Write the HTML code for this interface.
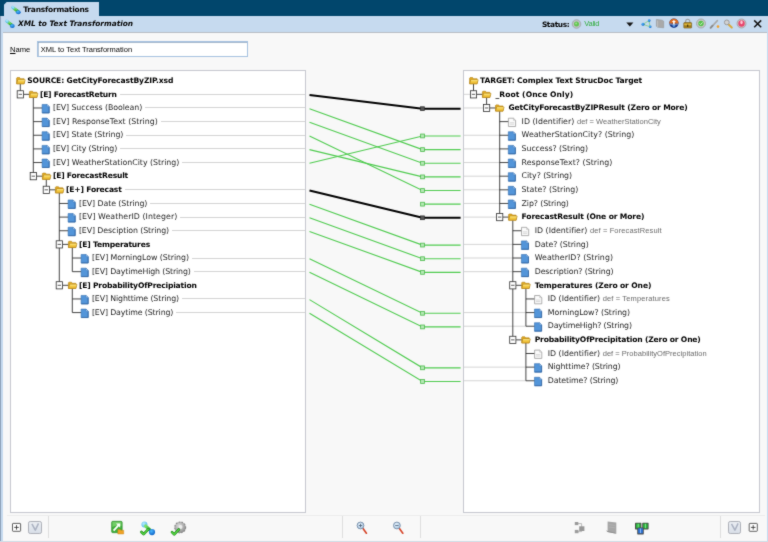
<!DOCTYPE html><html><head><meta charset="utf-8"><title>XML to Text Transformation</title><style>

html,body{margin:0;padding:0}
body{width:768px;height:542px;overflow:hidden;background:#f7f7f7;position:relative;font-family:"DejaVu Sans","Liberation Sans",sans-serif;color:#222}
#wrap{position:absolute;left:0;top:0;width:768px;height:542px;overflow:hidden;filter:url(#soft)}
#txtlayer{position:absolute;left:0;top:0;width:768px;height:542px;will-change:transform;transform:translateZ(0)}
.abs{position:absolute}
#topbar{left:0;top:0;width:768px;height:16px;background:#01466c}
#tab{left:3.7px;top:2px;width:95.5px;height:14.2px;background:#c6daef;clip-path:polygon(3px 0,100% 0,100% 100%,0 100%,0 3px)}
#tabtxt{left:23.3px;top:3.1px;height:13px;line-height:13px;font-weight:bold;font-size:7.5px;letter-spacing:-0.23px;color:#050505;white-space:nowrap}
#titlebar{left:0;top:16px;width:768px;height:16.5px;background:#c6daef;border-bottom:0.7px solid #b9bec4;box-sizing:border-box}
#title{left:18px;top:17px;height:13px;line-height:13px;font-weight:bold;font-style:italic;font-size:7.4px;color:#050505;white-space:nowrap}
#lstrip{left:0;top:16px;width:3px;height:526px;background:#c6daef;border-left:1px solid #8ea2ba;box-sizing:border-box}
#rstrip{left:766.8px;top:32px;width:1.2px;height:510px;background:#c6daef}
#bstrip{left:0;top:540.6px;width:768px;height:1.4px;background:#d3dbe5}
#content{left:3px;top:32.2px;width:763.8px;height:508.4px;background:#f8f8f8}
#name{left:10px;top:42.9px;height:13px;line-height:13px;font-family:"Liberation Sans",sans-serif;font-size:7.6px;color:#000;white-space:nowrap}
#name u{text-decoration-thickness:0.5px;text-underline-offset:0.6px}
#input{left:37.2px;top:40.7px;width:211.2px;height:16.1px;box-sizing:border-box;border:1.5px solid #a6c2e0;background:#fff;box-shadow:inset 0.6px 0.8px 0 #8aa3bf}
#inputtxt{left:40.8px;top:43.3px;height:13px;line-height:13px;font-family:"Liberation Sans",sans-serif;font-size:7.5px;color:#050505;white-space:nowrap}
.panel{background:#fff;border:1px solid #c6c8cf;box-sizing:border-box}
#lp{left:10px;top:70px;width:296.3px;height:443px}
#rp{left:463px;top:70px;width:296.8px;height:443px}
.t{position:absolute;height:13.64px;line-height:13.64px;white-space:nowrap}
.t.r{font-size:7.85px;color:#262626}
.t.b{font-size:7.6px;letter-spacing:-0.18px;font-weight:bold;color:#000}
.t.ll{display:flex;align-items:center;right:462.7px}
.t.ll span{flex:none}
.t.ll i{flex:1;height:1px;background:#d4d4d4;margin-left:3px;position:relative}
.t.r.ll i{top:0px}
.t.b.ll i{top:-0.1px}
.def{font-family:"Liberation Sans",sans-serif;font-size:7.5px;color:#6a6a6a;margin-left:2.7px;letter-spacing:0}
#status{left:541.9px;top:17.5px;height:13px;line-height:13px;font-weight:bold;font-size:7.4px;letter-spacing:-0.36px;color:#050505;white-space:nowrap}
#valid{left:584.2px;top:17.3px;height:13px;line-height:13px;font-family:"Liberation Sans",sans-serif;font-size:7.5px;letter-spacing:-0.2px;color:#32ad3e;white-space:nowrap}
#tbline{left:6.5px;top:515.4px;width:758px;height:1px;background:#ececec}
.sep{position:absolute;top:516.3px;height:21.5px;width:1px;background:#dedede}
.vbtn{position:absolute;top:520.6px;width:13.2px;height:13px;box-sizing:border-box;border:0.8px solid #adb0b8;border-radius:2.2px;background:linear-gradient(#eaedf2,#d9dfe8)}

</style></head><body><svg width="0" height="0" style="position:absolute"><defs><filter id="soft" x="0" y="0" width="100%" height="100%" color-interpolation-filters="sRGB"><feConvolveMatrix order="3" kernelMatrix="0.6 2.0 0.6 2.0 16 2.0 0.6 2.0 0.6" divisor="26.40" edgeMode="duplicate" preserveAlpha="true"/></filter></defs></svg><div id="wrap">
<div class="abs" id="topbar"></div>
<div class="abs" id="content"></div>
<div class="abs" id="titlebar"></div>
<div class="abs" id="lstrip"></div><div class="abs" id="rstrip"></div><div class="abs" id="bstrip"></div>
<div class="abs" id="tab"></div>
<div class="abs" id="input"></div>
<div class="abs panel" id="lp"></div><div class="abs panel" id="rp"></div>
<div class="abs" id="tbline"></div>
<div class="sep" style="left:48.1px"></div>
<div class="sep" style="left:341.6px"></div>
<div class="sep" style="left:420.2px"></div>
<div class="sep" style="left:720.1px"></div>
<div class="vbtn" style="left:28.4px"></div><div class="vbtn" style="left:728px"></div>
<div id="txtlayer">
<div class="abs" id="tabtxt">Transformations</div>
<div class="abs" id="title">XML to Text Transformation</div>
<div class="abs" id="status">Status:</div><div class="abs" id="valid">Valid</div>
<div class="abs" id="name"><u>N</u>ame</div>
<div class="abs" id="inputtxt">XML to Text Transformation</div>
<div class="t b" id="L0" style="left:27.20px;top:73.98px"><span class="m" style="letter-spacing:-0.118px">SOURCE: GetCityForecastByZIP.xsd</span></div>
<div class="t b ll" id="L1" style="left:39.90px;top:87.62px"><span class="m" style="letter-spacing:-0.218px">[E] ForecastReturn</span><i></i></div>
<div class="t r ll" id="L2" style="left:52.90px;top:101.16px"><span class="m" style="letter-spacing:-0.072px">[EV] Success (Boolean)</span><i></i></div>
<div class="t r ll" id="L3" style="left:52.90px;top:114.80px"><span class="m" style="letter-spacing:0.016px">[EV] ResponseText (String)</span><i></i></div>
<div class="t r ll" id="L4" style="left:52.90px;top:128.44px"><span class="m" style="letter-spacing:-0.070px">[EV] State (String)</span><i></i></div>
<div class="t r ll" id="L5" style="left:52.90px;top:142.08px"><span class="m" style="letter-spacing:-0.113px">[EV] City (String)</span><i></i></div>
<div class="t r ll" id="L6" style="left:52.90px;top:155.72px"><span class="m" style="letter-spacing:-0.026px">[EV] WeatherStationCity (String)</span><i></i></div>
<div class="t b" id="L7" style="left:52.90px;top:169.46px"><span class="m" style="letter-spacing:-0.200px">[E] ForecastResult</span></div>
<div class="t b ll" id="L8" style="left:65.90px;top:183.10px"><span class="m" style="letter-spacing:-0.161px">[E+] Forecast</span><i></i></div>
<div class="t r ll" id="L9" style="left:78.90px;top:196.64px"><span class="m" style="letter-spacing:-0.073px">[EV] Date (String)</span><i></i></div>
<div class="t r ll" id="L10" style="left:78.90px;top:210.28px"><span class="m" style="letter-spacing:0.052px">[EV] WeatherID (Integer)</span><i></i></div>
<div class="t r ll" id="L11" style="left:78.90px;top:223.92px"><span class="m" style="letter-spacing:-0.096px">[EV] Desciption (String)</span><i></i></div>
<div class="t b" id="L12" style="left:78.90px;top:237.66px"><span class="m" style="letter-spacing:-0.176px">[E] Temperatures</span></div>
<div class="t r ll" id="L13" style="left:91.90px;top:251.20px"><span class="m" style="letter-spacing:-0.044px">[EV] MorningLow (String)</span><i></i></div>
<div class="t r ll" id="L14" style="left:91.90px;top:264.84px"><span class="m" style="letter-spacing:-0.136px">[EV] DaytimeHigh (String)</span><i></i></div>
<div class="t b" id="L15" style="left:78.90px;top:278.58px"><span class="m" style="letter-spacing:-0.180px">[E] ProbabilityOfPrecipiation</span></div>
<div class="t r ll" id="L16" style="left:91.90px;top:292.12px"><span class="m" style="letter-spacing:-0.115px">[EV] Nighttime (String)</span><i></i></div>
<div class="t r ll" id="L17" style="left:91.90px;top:305.76px"><span class="m" style="letter-spacing:-0.132px">[EV] Daytime (String)</span><i></i></div>
<div class="t b" id="R0" style="left:480.00px;top:73.98px"><span class="m" style="letter-spacing:-0.134px">TARGET: Complex Text StrucDoc Target</span></div>
<div class="t b" id="R1" style="left:495.40px;top:87.62px"><span class="m" style="letter-spacing:0.061px">_Root (Once Only)</span></div>
<div class="t b" id="R2" style="left:508.50px;top:101.26px"><span class="m" style="letter-spacing:-0.157px">GetCityForecastByZIPResult (Zero or More)</span></div>
<div class="t r" id="R3" style="left:521.60px;top:114.80px"><span class="m" style="letter-spacing:0.026px">ID (Identifier)</span><span class="def" id="R3d" style="letter-spacing:0.019px">def = WeatherStationCity</span></div>
<div class="t r" id="R4" style="left:521.60px;top:128.44px"><span class="m" style="letter-spacing:0.008px">WeatherStationCity? (String)</span></div>
<div class="t r" id="R5" style="left:521.60px;top:142.08px"><span class="m" style="letter-spacing:-0.080px">Success? (String)</span></div>
<div class="t r" id="R6" style="left:521.60px;top:155.72px"><span class="m" style="letter-spacing:0.053px">ResponseText? (String)</span></div>
<div class="t r" id="R7" style="left:521.60px;top:169.36px"><span class="m" style="letter-spacing:-0.083px">City? (String)</span></div>
<div class="t r" id="R8" style="left:521.60px;top:183.00px"><span class="m" style="letter-spacing:-0.017px">State? (String)</span></div>
<div class="t r" id="R9" style="left:521.60px;top:196.64px"><span class="m" style="letter-spacing:-0.117px">Zip? (String)</span></div>
<div class="t b" id="R10" style="left:521.60px;top:210.38px"><span class="m" style="letter-spacing:-0.133px">ForecastResult (One or More)</span></div>
<div class="t r" id="R11" style="left:534.70px;top:223.92px"><span class="m" style="letter-spacing:0.020px">ID (Identifier)</span><span class="def" id="R11d" style="letter-spacing:0.115px">def = ForecastResult</span></div>
<div class="t r" id="R12" style="left:534.70px;top:237.56px"><span class="m" style="letter-spacing:-0.059px">Date? (String)</span></div>
<div class="t r" id="R13" style="left:534.70px;top:251.20px"><span class="m" style="letter-spacing:0.039px">WeatherID? (String)</span></div>
<div class="t r" id="R14" style="left:534.70px;top:264.84px"><span class="m" style="letter-spacing:-0.098px">Description? (String)</span></div>
<div class="t b" id="R15" style="left:534.70px;top:278.58px"><span class="m" style="letter-spacing:-0.115px">Temperatures (Zero or One)</span></div>
<div class="t r" id="R16" style="left:547.80px;top:292.12px"><span class="m" style="letter-spacing:-0.007px">ID (Identifier)</span><span class="def" id="R16d" style="letter-spacing:0.139px">def = Temperatures</span></div>
<div class="t r" id="R17" style="left:547.80px;top:305.76px"><span class="m" style="letter-spacing:-0.059px">MorningLow? (String)</span></div>
<div class="t r" id="R18" style="left:547.80px;top:319.40px"><span class="m" style="letter-spacing:-0.163px">DaytimeHigh? (String)</span></div>
<div class="t b" id="R19" style="left:534.70px;top:333.14px"><span class="m" style="letter-spacing:-0.159px">ProbabilityOfPrecipitation (Zero or One)</span></div>
<div class="t r" id="R20" style="left:547.80px;top:346.68px"><span class="m" style="letter-spacing:-0.007px">ID (Identifier)</span><span class="def" id="R20d" style="letter-spacing:0.025px">def = ProbabilityOfPrecipitation</span></div>
<div class="t r" id="R21" style="left:547.80px;top:360.32px"><span class="m" style="letter-spacing:-0.120px">Nighttime? (String)</span></div>
<div class="t r" id="R22" style="left:547.80px;top:373.96px"><span class="m" style="letter-spacing:-0.120px">Datetime? (String)</span></div>
</div>
<svg class="abs" style="left:0;top:0" width="768" height="542" viewBox="0 0 768 542">
<path d="M464.00 94.34 H470.20" stroke="#d4d4d4" stroke-width="1"/>
<path d="M464.00 107.98 H483.30" stroke="#d4d4d4" stroke-width="1"/>
<path d="M464.00 135.26 H499.70" stroke="#d4d4d4" stroke-width="1"/>
<path d="M464.00 148.90 H499.70" stroke="#d4d4d4" stroke-width="1"/>
<path d="M464.00 162.54 H499.70" stroke="#d4d4d4" stroke-width="1"/>
<path d="M464.00 176.18 H499.70" stroke="#d4d4d4" stroke-width="1"/>
<path d="M464.00 189.82 H499.70" stroke="#d4d4d4" stroke-width="1"/>
<path d="M464.00 203.46 H499.70" stroke="#d4d4d4" stroke-width="1"/>
<path d="M464.00 217.10 H496.40" stroke="#d4d4d4" stroke-width="1"/>
<path d="M464.00 244.38 H512.80" stroke="#d4d4d4" stroke-width="1"/>
<path d="M464.00 258.02 H512.80" stroke="#d4d4d4" stroke-width="1"/>
<path d="M464.00 271.66 H512.80" stroke="#d4d4d4" stroke-width="1"/>
<path d="M464.00 312.58 H525.90" stroke="#d4d4d4" stroke-width="1"/>
<path d="M464.00 326.22 H525.90" stroke="#d4d4d4" stroke-width="1"/>
<path d="M464.00 367.14 H525.90" stroke="#d4d4d4" stroke-width="1"/>
<path d="M464.00 380.78 H525.90" stroke="#d4d4d4" stroke-width="1"/>
<path d="M309.5 95.04 L422.5 108.68 H460.6" fill="none" stroke="#000" stroke-width="2.05" stroke-linejoin="round"/>
<rect x="420.60" y="106.78" width="3.8" height="3.8" fill="#555" stroke="#2a2a2a" stroke-width="0.7"/>
<path d="M309.5 190.52 L422.5 217.80 H460.6" fill="none" stroke="#000" stroke-width="2.05" stroke-linejoin="round"/>
<rect x="420.60" y="215.90" width="3.8" height="3.8" fill="#555" stroke="#2a2a2a" stroke-width="0.7"/>
<path d="M309.5 108.68 L422.5 149.60 H460.6" fill="none" stroke="#4fcb4f" stroke-width="1.1"/>
<rect x="420.60" y="147.70" width="3.8" height="3.8" fill="#b4e8b4" stroke="#4cba4c" stroke-width="0.8"/>
<path d="M309.5 122.32 L422.5 163.24 H460.6" fill="none" stroke="#4fcb4f" stroke-width="1.1"/>
<rect x="420.60" y="161.34" width="3.8" height="3.8" fill="#b4e8b4" stroke="#4cba4c" stroke-width="0.8"/>
<path d="M309.5 135.96 L422.5 190.52 H460.6" fill="none" stroke="#4fcb4f" stroke-width="1.1"/>
<rect x="420.60" y="188.62" width="3.8" height="3.8" fill="#b4e8b4" stroke="#4cba4c" stroke-width="0.8"/>
<path d="M309.5 149.60 L422.5 176.88 H460.6" fill="none" stroke="#4fcb4f" stroke-width="1.1"/>
<rect x="420.60" y="174.98" width="3.8" height="3.8" fill="#b4e8b4" stroke="#4cba4c" stroke-width="0.8"/>
<path d="M309.5 163.24 L422.5 135.96 H460.6" fill="none" stroke="#4fcb4f" stroke-width="1.1"/>
<rect x="420.60" y="134.06" width="3.8" height="3.8" fill="#b4e8b4" stroke="#4cba4c" stroke-width="0.8"/>
<path d="M422.5 204.16 H460.6" fill="none" stroke="#4fcb4f" stroke-width="1.1"/>
<rect x="420.60" y="202.26" width="3.8" height="3.8" fill="#b4e8b4" stroke="#4cba4c" stroke-width="0.8"/>
<path d="M309.5 204.16 L422.5 245.08 H460.6" fill="none" stroke="#4fcb4f" stroke-width="1.1"/>
<rect x="420.60" y="243.18" width="3.8" height="3.8" fill="#b4e8b4" stroke="#4cba4c" stroke-width="0.8"/>
<path d="M309.5 217.80 L422.5 258.72 H460.6" fill="none" stroke="#4fcb4f" stroke-width="1.1"/>
<rect x="420.60" y="256.82" width="3.8" height="3.8" fill="#b4e8b4" stroke="#4cba4c" stroke-width="0.8"/>
<path d="M309.5 231.44 L422.5 272.36 H460.6" fill="none" stroke="#4fcb4f" stroke-width="1.1"/>
<rect x="420.60" y="270.46" width="3.8" height="3.8" fill="#b4e8b4" stroke="#4cba4c" stroke-width="0.8"/>
<path d="M309.5 258.72 L422.5 313.28 H460.6" fill="none" stroke="#4fcb4f" stroke-width="1.1"/>
<rect x="420.60" y="311.38" width="3.8" height="3.8" fill="#b4e8b4" stroke="#4cba4c" stroke-width="0.8"/>
<path d="M309.5 272.36 L422.5 326.92 H460.6" fill="none" stroke="#4fcb4f" stroke-width="1.1"/>
<rect x="420.60" y="325.02" width="3.8" height="3.8" fill="#b4e8b4" stroke="#4cba4c" stroke-width="0.8"/>
<path d="M309.5 299.64 L422.5 367.84 H460.6" fill="none" stroke="#4fcb4f" stroke-width="1.1"/>
<rect x="420.60" y="365.94" width="3.8" height="3.8" fill="#b4e8b4" stroke="#4cba4c" stroke-width="0.8"/>
<path d="M309.5 313.28 L422.5 381.48 H460.6" fill="none" stroke="#4fcb4f" stroke-width="1.1"/>
<rect x="420.60" y="379.58" width="3.8" height="3.8" fill="#b4e8b4" stroke="#4cba4c" stroke-width="0.8"/>
<path d="M20.30 83.90 V94.34" stroke="#303030" stroke-width="0.9"/>
<path d="M33.30 97.54 V176.18" stroke="#303030" stroke-width="0.9"/>
<path d="M46.30 179.38 V189.82" stroke="#303030" stroke-width="0.9"/>
<path d="M59.30 193.02 V285.30" stroke="#303030" stroke-width="0.9"/>
<path d="M72.30 247.58 V271.66" stroke="#303030" stroke-width="0.9"/>
<path d="M72.30 288.50 V312.58" stroke="#303030" stroke-width="0.9"/>
<g transform="translate(16.20,77.20)"><path d="M0.4 0.9 L0.4 6.5 L7.9 6.5 L7.9 1.5 L4.3 1.5 L3.5 0.4 L0.9 0.4 Z" fill="#e2ab22" stroke="#ad7c12" stroke-width="0.6"/><path d="M0.5 6.7 L1.5 2.6 L9.0 2.6 L7.9 6.7 Z" fill="url(#gFold)" stroke="#ad7c12" stroke-width="0.6"/><path d="M1.9 3.2 L8.3 3.2" stroke="#fdeb96" stroke-width="0.7"/></g>
<path d="M23.60 94.34 H29.50" stroke="#303030" stroke-width="0.9"/>
<rect x="17.20" y="90.74" width="6.2" height="7.2" fill="#fff" stroke="#303030" stroke-width="0.8"/><path d="M18.60 94.34 H22.00" stroke="#333" stroke-width="0.8"/>
<g transform="translate(29.00,90.84)"><path d="M0.4 0.9 L0.4 6.5 L7.9 6.5 L7.9 1.5 L4.3 1.5 L3.5 0.4 L0.9 0.4 Z" fill="#e2ab22" stroke="#ad7c12" stroke-width="0.6"/><path d="M0.5 6.7 L1.5 2.6 L9.0 2.6 L7.9 6.7 Z" fill="url(#gFold)" stroke="#ad7c12" stroke-width="0.6"/><path d="M1.9 3.2 L8.3 3.2" stroke="#fdeb96" stroke-width="0.7"/></g>
<path d="M33.30 107.98 H42.50" stroke="#303030" stroke-width="0.9"/>
<g transform="translate(41.70,104.08)"><path d="M0.4 0.4 L5.4 0.4 L7.5 2.5 L7.5 8.9 L0.4 8.9 Z" fill="#5395d9" stroke="#346fb0" stroke-width="0.6"/><path d="M0.6 8.8 H7.5 V2.8" fill="none" stroke="#2b5f9c" stroke-width="0.7"/><path d="M5.4 0.4 L5.4 2.5 L7.5 2.5 Z" fill="#d5e4f5" stroke="#346fb0" stroke-width="0.4"/></g>
<path d="M33.30 121.62 H42.50" stroke="#303030" stroke-width="0.9"/>
<g transform="translate(41.70,117.72)"><path d="M0.4 0.4 L5.4 0.4 L7.5 2.5 L7.5 8.9 L0.4 8.9 Z" fill="#5395d9" stroke="#346fb0" stroke-width="0.6"/><path d="M0.6 8.8 H7.5 V2.8" fill="none" stroke="#2b5f9c" stroke-width="0.7"/><path d="M5.4 0.4 L5.4 2.5 L7.5 2.5 Z" fill="#d5e4f5" stroke="#346fb0" stroke-width="0.4"/></g>
<path d="M33.30 135.26 H42.50" stroke="#303030" stroke-width="0.9"/>
<g transform="translate(41.70,131.36)"><path d="M0.4 0.4 L5.4 0.4 L7.5 2.5 L7.5 8.9 L0.4 8.9 Z" fill="#5395d9" stroke="#346fb0" stroke-width="0.6"/><path d="M0.6 8.8 H7.5 V2.8" fill="none" stroke="#2b5f9c" stroke-width="0.7"/><path d="M5.4 0.4 L5.4 2.5 L7.5 2.5 Z" fill="#d5e4f5" stroke="#346fb0" stroke-width="0.4"/></g>
<path d="M33.30 148.90 H42.50" stroke="#303030" stroke-width="0.9"/>
<g transform="translate(41.70,145.00)"><path d="M0.4 0.4 L5.4 0.4 L7.5 2.5 L7.5 8.9 L0.4 8.9 Z" fill="#5395d9" stroke="#346fb0" stroke-width="0.6"/><path d="M0.6 8.8 H7.5 V2.8" fill="none" stroke="#2b5f9c" stroke-width="0.7"/><path d="M5.4 0.4 L5.4 2.5 L7.5 2.5 Z" fill="#d5e4f5" stroke="#346fb0" stroke-width="0.4"/></g>
<path d="M33.30 162.54 H42.50" stroke="#303030" stroke-width="0.9"/>
<g transform="translate(41.70,158.64)"><path d="M0.4 0.4 L5.4 0.4 L7.5 2.5 L7.5 8.9 L0.4 8.9 Z" fill="#5395d9" stroke="#346fb0" stroke-width="0.6"/><path d="M0.6 8.8 H7.5 V2.8" fill="none" stroke="#2b5f9c" stroke-width="0.7"/><path d="M5.4 0.4 L5.4 2.5 L7.5 2.5 Z" fill="#d5e4f5" stroke="#346fb0" stroke-width="0.4"/></g>
<path d="M36.60 176.18 H42.50" stroke="#303030" stroke-width="0.9"/>
<rect x="30.20" y="172.58" width="6.2" height="7.2" fill="#fff" stroke="#303030" stroke-width="0.8"/><path d="M31.60 176.18 H35.00" stroke="#333" stroke-width="0.8"/>
<g transform="translate(42.00,172.68)"><path d="M0.4 0.9 L0.4 6.5 L7.9 6.5 L7.9 1.5 L4.3 1.5 L3.5 0.4 L0.9 0.4 Z" fill="#e2ab22" stroke="#ad7c12" stroke-width="0.6"/><path d="M0.5 6.7 L1.5 2.6 L9.0 2.6 L7.9 6.7 Z" fill="url(#gFold)" stroke="#ad7c12" stroke-width="0.6"/><path d="M1.9 3.2 L8.3 3.2" stroke="#fdeb96" stroke-width="0.7"/></g>
<path d="M49.60 189.82 H55.50" stroke="#303030" stroke-width="0.9"/>
<rect x="43.20" y="186.22" width="6.2" height="7.2" fill="#fff" stroke="#303030" stroke-width="0.8"/><path d="M44.60 189.82 H48.00" stroke="#333" stroke-width="0.8"/>
<g transform="translate(55.00,186.32)"><path d="M0.4 0.9 L0.4 6.5 L7.9 6.5 L7.9 1.5 L4.3 1.5 L3.5 0.4 L0.9 0.4 Z" fill="#e2ab22" stroke="#ad7c12" stroke-width="0.6"/><path d="M0.5 6.7 L1.5 2.6 L9.0 2.6 L7.9 6.7 Z" fill="url(#gFold)" stroke="#ad7c12" stroke-width="0.6"/><path d="M1.9 3.2 L8.3 3.2" stroke="#fdeb96" stroke-width="0.7"/></g>
<path d="M59.30 203.46 H68.50" stroke="#303030" stroke-width="0.9"/>
<g transform="translate(67.70,199.56)"><path d="M0.4 0.4 L5.4 0.4 L7.5 2.5 L7.5 8.9 L0.4 8.9 Z" fill="#5395d9" stroke="#346fb0" stroke-width="0.6"/><path d="M0.6 8.8 H7.5 V2.8" fill="none" stroke="#2b5f9c" stroke-width="0.7"/><path d="M5.4 0.4 L5.4 2.5 L7.5 2.5 Z" fill="#d5e4f5" stroke="#346fb0" stroke-width="0.4"/></g>
<path d="M59.30 217.10 H68.50" stroke="#303030" stroke-width="0.9"/>
<g transform="translate(67.70,213.20)"><path d="M0.4 0.4 L5.4 0.4 L7.5 2.5 L7.5 8.9 L0.4 8.9 Z" fill="#5395d9" stroke="#346fb0" stroke-width="0.6"/><path d="M0.6 8.8 H7.5 V2.8" fill="none" stroke="#2b5f9c" stroke-width="0.7"/><path d="M5.4 0.4 L5.4 2.5 L7.5 2.5 Z" fill="#d5e4f5" stroke="#346fb0" stroke-width="0.4"/></g>
<path d="M59.30 230.74 H68.50" stroke="#303030" stroke-width="0.9"/>
<g transform="translate(67.70,226.84)"><path d="M0.4 0.4 L5.4 0.4 L7.5 2.5 L7.5 8.9 L0.4 8.9 Z" fill="#5395d9" stroke="#346fb0" stroke-width="0.6"/><path d="M0.6 8.8 H7.5 V2.8" fill="none" stroke="#2b5f9c" stroke-width="0.7"/><path d="M5.4 0.4 L5.4 2.5 L7.5 2.5 Z" fill="#d5e4f5" stroke="#346fb0" stroke-width="0.4"/></g>
<path d="M62.60 244.38 H68.50" stroke="#303030" stroke-width="0.9"/>
<rect x="56.20" y="240.78" width="6.2" height="7.2" fill="#fff" stroke="#303030" stroke-width="0.8"/><path d="M57.60 244.38 H61.00" stroke="#333" stroke-width="0.8"/>
<g transform="translate(68.00,240.88)"><path d="M0.4 0.9 L0.4 6.5 L7.9 6.5 L7.9 1.5 L4.3 1.5 L3.5 0.4 L0.9 0.4 Z" fill="#e2ab22" stroke="#ad7c12" stroke-width="0.6"/><path d="M0.5 6.7 L1.5 2.6 L9.0 2.6 L7.9 6.7 Z" fill="url(#gFold)" stroke="#ad7c12" stroke-width="0.6"/><path d="M1.9 3.2 L8.3 3.2" stroke="#fdeb96" stroke-width="0.7"/></g>
<path d="M72.30 258.02 H81.50" stroke="#303030" stroke-width="0.9"/>
<g transform="translate(80.70,254.12)"><path d="M0.4 0.4 L5.4 0.4 L7.5 2.5 L7.5 8.9 L0.4 8.9 Z" fill="#5395d9" stroke="#346fb0" stroke-width="0.6"/><path d="M0.6 8.8 H7.5 V2.8" fill="none" stroke="#2b5f9c" stroke-width="0.7"/><path d="M5.4 0.4 L5.4 2.5 L7.5 2.5 Z" fill="#d5e4f5" stroke="#346fb0" stroke-width="0.4"/></g>
<path d="M72.30 271.66 H81.50" stroke="#303030" stroke-width="0.9"/>
<g transform="translate(80.70,267.76)"><path d="M0.4 0.4 L5.4 0.4 L7.5 2.5 L7.5 8.9 L0.4 8.9 Z" fill="#5395d9" stroke="#346fb0" stroke-width="0.6"/><path d="M0.6 8.8 H7.5 V2.8" fill="none" stroke="#2b5f9c" stroke-width="0.7"/><path d="M5.4 0.4 L5.4 2.5 L7.5 2.5 Z" fill="#d5e4f5" stroke="#346fb0" stroke-width="0.4"/></g>
<path d="M62.60 285.30 H68.50" stroke="#303030" stroke-width="0.9"/>
<rect x="56.20" y="281.70" width="6.2" height="7.2" fill="#fff" stroke="#303030" stroke-width="0.8"/><path d="M57.60 285.30 H61.00" stroke="#333" stroke-width="0.8"/>
<g transform="translate(68.00,281.80)"><path d="M0.4 0.9 L0.4 6.5 L7.9 6.5 L7.9 1.5 L4.3 1.5 L3.5 0.4 L0.9 0.4 Z" fill="#e2ab22" stroke="#ad7c12" stroke-width="0.6"/><path d="M0.5 6.7 L1.5 2.6 L9.0 2.6 L7.9 6.7 Z" fill="url(#gFold)" stroke="#ad7c12" stroke-width="0.6"/><path d="M1.9 3.2 L8.3 3.2" stroke="#fdeb96" stroke-width="0.7"/></g>
<path d="M72.30 298.94 H81.50" stroke="#303030" stroke-width="0.9"/>
<g transform="translate(80.70,295.04)"><path d="M0.4 0.4 L5.4 0.4 L7.5 2.5 L7.5 8.9 L0.4 8.9 Z" fill="#5395d9" stroke="#346fb0" stroke-width="0.6"/><path d="M0.6 8.8 H7.5 V2.8" fill="none" stroke="#2b5f9c" stroke-width="0.7"/><path d="M5.4 0.4 L5.4 2.5 L7.5 2.5 Z" fill="#d5e4f5" stroke="#346fb0" stroke-width="0.4"/></g>
<path d="M72.30 312.58 H81.50" stroke="#303030" stroke-width="0.9"/>
<g transform="translate(80.70,308.68)"><path d="M0.4 0.4 L5.4 0.4 L7.5 2.5 L7.5 8.9 L0.4 8.9 Z" fill="#5395d9" stroke="#346fb0" stroke-width="0.6"/><path d="M0.6 8.8 H7.5 V2.8" fill="none" stroke="#2b5f9c" stroke-width="0.7"/><path d="M5.4 0.4 L5.4 2.5 L7.5 2.5 Z" fill="#d5e4f5" stroke="#346fb0" stroke-width="0.4"/></g>
<path d="M473.50 83.90 V94.34" stroke="#303030" stroke-width="0.9"/>
<path d="M486.60 97.54 V107.98" stroke="#303030" stroke-width="0.9"/>
<path d="M499.70 111.18 V217.10" stroke="#303030" stroke-width="0.9"/>
<path d="M512.80 220.30 V339.86" stroke="#303030" stroke-width="0.9"/>
<path d="M525.90 288.50 V326.22" stroke="#303030" stroke-width="0.9"/>
<path d="M525.90 343.06 V380.78" stroke="#303030" stroke-width="0.9"/>
<g transform="translate(469.20,77.20)"><path d="M0.4 0.9 L0.4 6.5 L7.9 6.5 L7.9 1.5 L4.3 1.5 L3.5 0.4 L0.9 0.4 Z" fill="#e2ab22" stroke="#ad7c12" stroke-width="0.6"/><path d="M0.5 6.7 L1.5 2.6 L9.0 2.6 L7.9 6.7 Z" fill="url(#gFold)" stroke="#ad7c12" stroke-width="0.6"/><path d="M1.9 3.2 L8.3 3.2" stroke="#fdeb96" stroke-width="0.7"/></g>
<path d="M476.80 94.34 H482.50" stroke="#303030" stroke-width="0.9"/>
<rect x="470.40" y="90.74" width="6.2" height="7.2" fill="#fff" stroke="#303030" stroke-width="0.8"/><path d="M471.80 94.34 H475.20" stroke="#333" stroke-width="0.8"/>
<g transform="translate(482.00,90.84)"><path d="M0.4 0.9 L0.4 6.5 L7.9 6.5 L7.9 1.5 L4.3 1.5 L3.5 0.4 L0.9 0.4 Z" fill="#e2ab22" stroke="#ad7c12" stroke-width="0.6"/><path d="M0.5 6.7 L1.5 2.6 L9.0 2.6 L7.9 6.7 Z" fill="url(#gFold)" stroke="#ad7c12" stroke-width="0.6"/><path d="M1.9 3.2 L8.3 3.2" stroke="#fdeb96" stroke-width="0.7"/></g>
<path d="M489.90 107.98 H495.60" stroke="#303030" stroke-width="0.9"/>
<rect x="483.50" y="104.38" width="6.2" height="7.2" fill="#fff" stroke="#303030" stroke-width="0.8"/><path d="M484.90 107.98 H488.30" stroke="#333" stroke-width="0.8"/>
<g transform="translate(495.10,104.48)"><path d="M0.4 0.9 L0.4 6.5 L7.9 6.5 L7.9 1.5 L4.3 1.5 L3.5 0.4 L0.9 0.4 Z" fill="#e2ab22" stroke="#ad7c12" stroke-width="0.6"/><path d="M0.5 6.7 L1.5 2.6 L9.0 2.6 L7.9 6.7 Z" fill="url(#gFold)" stroke="#ad7c12" stroke-width="0.6"/><path d="M1.9 3.2 L8.3 3.2" stroke="#fdeb96" stroke-width="0.7"/></g>
<path d="M499.70 121.62 H508.70" stroke="#303030" stroke-width="0.9"/>
<g transform="translate(507.90,117.72)"><path d="M0.5 0.5 L5.6 0.5 L7.7 2.6 L7.7 8.8 L0.5 8.8 Z" fill="#fbfbfb" stroke="#8f8f8f" stroke-width="0.7"/><path d="M5.6 0.5 L5.6 2.6 L7.7 2.6" fill="none" stroke="#a8a8a8" stroke-width="0.5"/><path d="M1.9 5.0 H6.2 M1.9 6.5 H6.2" stroke="#c9c9c9" stroke-width="0.7"/></g>
<path d="M499.70 135.26 H508.70" stroke="#303030" stroke-width="0.9"/>
<g transform="translate(507.90,131.36)"><path d="M0.4 0.4 L5.4 0.4 L7.5 2.5 L7.5 8.9 L0.4 8.9 Z" fill="#5395d9" stroke="#346fb0" stroke-width="0.6"/><path d="M0.6 8.8 H7.5 V2.8" fill="none" stroke="#2b5f9c" stroke-width="0.7"/><path d="M5.4 0.4 L5.4 2.5 L7.5 2.5 Z" fill="#d5e4f5" stroke="#346fb0" stroke-width="0.4"/></g>
<path d="M499.70 148.90 H508.70" stroke="#303030" stroke-width="0.9"/>
<g transform="translate(507.90,145.00)"><path d="M0.4 0.4 L5.4 0.4 L7.5 2.5 L7.5 8.9 L0.4 8.9 Z" fill="#5395d9" stroke="#346fb0" stroke-width="0.6"/><path d="M0.6 8.8 H7.5 V2.8" fill="none" stroke="#2b5f9c" stroke-width="0.7"/><path d="M5.4 0.4 L5.4 2.5 L7.5 2.5 Z" fill="#d5e4f5" stroke="#346fb0" stroke-width="0.4"/></g>
<path d="M499.70 162.54 H508.70" stroke="#303030" stroke-width="0.9"/>
<g transform="translate(507.90,158.64)"><path d="M0.4 0.4 L5.4 0.4 L7.5 2.5 L7.5 8.9 L0.4 8.9 Z" fill="#5395d9" stroke="#346fb0" stroke-width="0.6"/><path d="M0.6 8.8 H7.5 V2.8" fill="none" stroke="#2b5f9c" stroke-width="0.7"/><path d="M5.4 0.4 L5.4 2.5 L7.5 2.5 Z" fill="#d5e4f5" stroke="#346fb0" stroke-width="0.4"/></g>
<path d="M499.70 176.18 H508.70" stroke="#303030" stroke-width="0.9"/>
<g transform="translate(507.90,172.28)"><path d="M0.4 0.4 L5.4 0.4 L7.5 2.5 L7.5 8.9 L0.4 8.9 Z" fill="#5395d9" stroke="#346fb0" stroke-width="0.6"/><path d="M0.6 8.8 H7.5 V2.8" fill="none" stroke="#2b5f9c" stroke-width="0.7"/><path d="M5.4 0.4 L5.4 2.5 L7.5 2.5 Z" fill="#d5e4f5" stroke="#346fb0" stroke-width="0.4"/></g>
<path d="M499.70 189.82 H508.70" stroke="#303030" stroke-width="0.9"/>
<g transform="translate(507.90,185.92)"><path d="M0.4 0.4 L5.4 0.4 L7.5 2.5 L7.5 8.9 L0.4 8.9 Z" fill="#5395d9" stroke="#346fb0" stroke-width="0.6"/><path d="M0.6 8.8 H7.5 V2.8" fill="none" stroke="#2b5f9c" stroke-width="0.7"/><path d="M5.4 0.4 L5.4 2.5 L7.5 2.5 Z" fill="#d5e4f5" stroke="#346fb0" stroke-width="0.4"/></g>
<path d="M499.70 203.46 H508.70" stroke="#303030" stroke-width="0.9"/>
<g transform="translate(507.90,199.56)"><path d="M0.4 0.4 L5.4 0.4 L7.5 2.5 L7.5 8.9 L0.4 8.9 Z" fill="#5395d9" stroke="#346fb0" stroke-width="0.6"/><path d="M0.6 8.8 H7.5 V2.8" fill="none" stroke="#2b5f9c" stroke-width="0.7"/><path d="M5.4 0.4 L5.4 2.5 L7.5 2.5 Z" fill="#d5e4f5" stroke="#346fb0" stroke-width="0.4"/></g>
<path d="M503.00 217.10 H508.70" stroke="#303030" stroke-width="0.9"/>
<rect x="496.60" y="213.50" width="6.2" height="7.2" fill="#fff" stroke="#303030" stroke-width="0.8"/><path d="M498.00 217.10 H501.40" stroke="#333" stroke-width="0.8"/>
<g transform="translate(508.20,213.60)"><path d="M0.4 0.9 L0.4 6.5 L7.9 6.5 L7.9 1.5 L4.3 1.5 L3.5 0.4 L0.9 0.4 Z" fill="#e2ab22" stroke="#ad7c12" stroke-width="0.6"/><path d="M0.5 6.7 L1.5 2.6 L9.0 2.6 L7.9 6.7 Z" fill="url(#gFold)" stroke="#ad7c12" stroke-width="0.6"/><path d="M1.9 3.2 L8.3 3.2" stroke="#fdeb96" stroke-width="0.7"/></g>
<path d="M512.80 230.74 H521.80" stroke="#303030" stroke-width="0.9"/>
<g transform="translate(521.00,226.84)"><path d="M0.5 0.5 L5.6 0.5 L7.7 2.6 L7.7 8.8 L0.5 8.8 Z" fill="#fbfbfb" stroke="#8f8f8f" stroke-width="0.7"/><path d="M5.6 0.5 L5.6 2.6 L7.7 2.6" fill="none" stroke="#a8a8a8" stroke-width="0.5"/><path d="M1.9 5.0 H6.2 M1.9 6.5 H6.2" stroke="#c9c9c9" stroke-width="0.7"/></g>
<path d="M512.80 244.38 H521.80" stroke="#303030" stroke-width="0.9"/>
<g transform="translate(521.00,240.48)"><path d="M0.4 0.4 L5.4 0.4 L7.5 2.5 L7.5 8.9 L0.4 8.9 Z" fill="#5395d9" stroke="#346fb0" stroke-width="0.6"/><path d="M0.6 8.8 H7.5 V2.8" fill="none" stroke="#2b5f9c" stroke-width="0.7"/><path d="M5.4 0.4 L5.4 2.5 L7.5 2.5 Z" fill="#d5e4f5" stroke="#346fb0" stroke-width="0.4"/></g>
<path d="M512.80 258.02 H521.80" stroke="#303030" stroke-width="0.9"/>
<g transform="translate(521.00,254.12)"><path d="M0.4 0.4 L5.4 0.4 L7.5 2.5 L7.5 8.9 L0.4 8.9 Z" fill="#5395d9" stroke="#346fb0" stroke-width="0.6"/><path d="M0.6 8.8 H7.5 V2.8" fill="none" stroke="#2b5f9c" stroke-width="0.7"/><path d="M5.4 0.4 L5.4 2.5 L7.5 2.5 Z" fill="#d5e4f5" stroke="#346fb0" stroke-width="0.4"/></g>
<path d="M512.80 271.66 H521.80" stroke="#303030" stroke-width="0.9"/>
<g transform="translate(521.00,267.76)"><path d="M0.4 0.4 L5.4 0.4 L7.5 2.5 L7.5 8.9 L0.4 8.9 Z" fill="#5395d9" stroke="#346fb0" stroke-width="0.6"/><path d="M0.6 8.8 H7.5 V2.8" fill="none" stroke="#2b5f9c" stroke-width="0.7"/><path d="M5.4 0.4 L5.4 2.5 L7.5 2.5 Z" fill="#d5e4f5" stroke="#346fb0" stroke-width="0.4"/></g>
<path d="M516.10 285.30 H521.80" stroke="#303030" stroke-width="0.9"/>
<rect x="509.70" y="281.70" width="6.2" height="7.2" fill="#fff" stroke="#303030" stroke-width="0.8"/><path d="M511.10 285.30 H514.50" stroke="#333" stroke-width="0.8"/>
<g transform="translate(521.30,281.80)"><path d="M0.4 0.9 L0.4 6.5 L7.9 6.5 L7.9 1.5 L4.3 1.5 L3.5 0.4 L0.9 0.4 Z" fill="#e2ab22" stroke="#ad7c12" stroke-width="0.6"/><path d="M0.5 6.7 L1.5 2.6 L9.0 2.6 L7.9 6.7 Z" fill="url(#gFold)" stroke="#ad7c12" stroke-width="0.6"/><path d="M1.9 3.2 L8.3 3.2" stroke="#fdeb96" stroke-width="0.7"/></g>
<path d="M525.90 298.94 H534.90" stroke="#303030" stroke-width="0.9"/>
<g transform="translate(534.10,295.04)"><path d="M0.5 0.5 L5.6 0.5 L7.7 2.6 L7.7 8.8 L0.5 8.8 Z" fill="#fbfbfb" stroke="#8f8f8f" stroke-width="0.7"/><path d="M5.6 0.5 L5.6 2.6 L7.7 2.6" fill="none" stroke="#a8a8a8" stroke-width="0.5"/><path d="M1.9 5.0 H6.2 M1.9 6.5 H6.2" stroke="#c9c9c9" stroke-width="0.7"/></g>
<path d="M525.90 312.58 H534.90" stroke="#303030" stroke-width="0.9"/>
<g transform="translate(534.10,308.68)"><path d="M0.4 0.4 L5.4 0.4 L7.5 2.5 L7.5 8.9 L0.4 8.9 Z" fill="#5395d9" stroke="#346fb0" stroke-width="0.6"/><path d="M0.6 8.8 H7.5 V2.8" fill="none" stroke="#2b5f9c" stroke-width="0.7"/><path d="M5.4 0.4 L5.4 2.5 L7.5 2.5 Z" fill="#d5e4f5" stroke="#346fb0" stroke-width="0.4"/></g>
<path d="M525.90 326.22 H534.90" stroke="#303030" stroke-width="0.9"/>
<g transform="translate(534.10,322.32)"><path d="M0.4 0.4 L5.4 0.4 L7.5 2.5 L7.5 8.9 L0.4 8.9 Z" fill="#5395d9" stroke="#346fb0" stroke-width="0.6"/><path d="M0.6 8.8 H7.5 V2.8" fill="none" stroke="#2b5f9c" stroke-width="0.7"/><path d="M5.4 0.4 L5.4 2.5 L7.5 2.5 Z" fill="#d5e4f5" stroke="#346fb0" stroke-width="0.4"/></g>
<path d="M516.10 339.86 H521.80" stroke="#303030" stroke-width="0.9"/>
<rect x="509.70" y="336.26" width="6.2" height="7.2" fill="#fff" stroke="#303030" stroke-width="0.8"/><path d="M511.10 339.86 H514.50" stroke="#333" stroke-width="0.8"/>
<g transform="translate(521.30,336.36)"><path d="M0.4 0.9 L0.4 6.5 L7.9 6.5 L7.9 1.5 L4.3 1.5 L3.5 0.4 L0.9 0.4 Z" fill="#e2ab22" stroke="#ad7c12" stroke-width="0.6"/><path d="M0.5 6.7 L1.5 2.6 L9.0 2.6 L7.9 6.7 Z" fill="url(#gFold)" stroke="#ad7c12" stroke-width="0.6"/><path d="M1.9 3.2 L8.3 3.2" stroke="#fdeb96" stroke-width="0.7"/></g>
<path d="M525.90 353.50 H534.90" stroke="#303030" stroke-width="0.9"/>
<g transform="translate(534.10,349.60)"><path d="M0.5 0.5 L5.6 0.5 L7.7 2.6 L7.7 8.8 L0.5 8.8 Z" fill="#fbfbfb" stroke="#8f8f8f" stroke-width="0.7"/><path d="M5.6 0.5 L5.6 2.6 L7.7 2.6" fill="none" stroke="#a8a8a8" stroke-width="0.5"/><path d="M1.9 5.0 H6.2 M1.9 6.5 H6.2" stroke="#c9c9c9" stroke-width="0.7"/></g>
<path d="M525.90 367.14 H534.90" stroke="#303030" stroke-width="0.9"/>
<g transform="translate(534.10,363.24)"><path d="M0.4 0.4 L5.4 0.4 L7.5 2.5 L7.5 8.9 L0.4 8.9 Z" fill="#5395d9" stroke="#346fb0" stroke-width="0.6"/><path d="M0.6 8.8 H7.5 V2.8" fill="none" stroke="#2b5f9c" stroke-width="0.7"/><path d="M5.4 0.4 L5.4 2.5 L7.5 2.5 Z" fill="#d5e4f5" stroke="#346fb0" stroke-width="0.4"/></g>
<path d="M525.90 380.78 H534.90" stroke="#303030" stroke-width="0.9"/>
<g transform="translate(534.10,376.88)"><path d="M0.4 0.4 L5.4 0.4 L7.5 2.5 L7.5 8.9 L0.4 8.9 Z" fill="#5395d9" stroke="#346fb0" stroke-width="0.6"/><path d="M0.6 8.8 H7.5 V2.8" fill="none" stroke="#2b5f9c" stroke-width="0.7"/><path d="M5.4 0.4 L5.4 2.5 L7.5 2.5 Z" fill="#d5e4f5" stroke="#346fb0" stroke-width="0.4"/></g>
<defs>
<radialGradient id="gBlue" cx="0.4" cy="0.35" r="0.7"><stop offset="0" stop-color="#4db8ff"/><stop offset="1" stop-color="#0b5fc4"/></radialGradient>
<radialGradient id="gCyan" cx="0.4" cy="0.35" r="0.7"><stop offset="0" stop-color="#b8ecff"/><stop offset="1" stop-color="#4bb7e6"/></radialGradient>
<linearGradient id="gGreen" x1="0" y1="0" x2="1" y2="1"><stop offset="0" stop-color="#7be36a"/><stop offset="1" stop-color="#1f9a1f"/></linearGradient>
<radialGradient id="gGrey" cx="0.4" cy="0.35" r="0.7"><stop offset="0" stop-color="#dcdcdc"/><stop offset="1" stop-color="#8c8c8c"/></radialGradient>
<radialGradient id="gLens" cx="0.4" cy="0.35" r="0.7"><stop offset="0" stop-color="#e4f1fb"/><stop offset="1" stop-color="#a9c7e2"/></radialGradient>
<linearGradient id="gFold" x1="0" y1="0" x2="0" y2="1"><stop offset="0" stop-color="#fbdc5c"/><stop offset="1" stop-color="#e9b32a"/></linearGradient>
<g id="xform">
  <path d="M2.6 2.3 L6.6 5.4" stroke="url(#gGreen)" stroke-width="3" stroke-linecap="round"/>
  <path d="M3.2 1.9 L6.2 4.3" stroke="#8ff07a" stroke-width="0.8" stroke-linecap="round" opacity="0.7"/>
  <ellipse cx="1.9" cy="1.7" rx="1.9" ry="1.5" transform="rotate(38 1.9 1.7)" fill="url(#gCyan)"/>
  <ellipse cx="7.2" cy="6.3" rx="2.4" ry="2.0" fill="url(#gBlue)"/>
</g>
<g id="check">
  <path d="M0.8 3.6 L3.0 5.8 L7.6 0.9" fill="none" stroke="#1d7f1d" stroke-width="2.6" stroke-linecap="round" stroke-linejoin="round"/>
  <path d="M0.8 3.6 L3.0 5.8 L7.6 0.9" fill="none" stroke="#4fd13c" stroke-width="1.6" stroke-linecap="round" stroke-linejoin="round"/>
</g>
</defs>
<!-- tab + title icons -->
<use href="#xform" x="11.1" y="5.9"/>
<use href="#xform" x="5.1" y="19.6"/>
<!-- status dot -->
<circle cx="576.5" cy="24" r="4.3" fill="#bfc3c5" stroke="#999ea2" stroke-width="0.7"/>
<circle cx="576.5" cy="24" r="2.5" fill="#62c552"/>
<circle cx="576.1" cy="23.5" r="1" fill="#9be389"/>
<!-- dropdown triangle -->
<path d="M626.3 22.5 H633.4 L629.85 26.4 Z" fill="#161616"/>
<!-- network icon -->
<g>
 <path d="M643 24.3 L649 20.6 M643 24.3 L650 26.8 M649 20.6 L650 26.8" stroke="#7fd07f" stroke-width="0.8" fill="none"/>
 <circle cx="643" cy="24.3" r="1.5" fill="url(#gBlue)"/>
 <circle cx="649.2" cy="20.6" r="1.3" fill="url(#gBlue)"/>
 <circle cx="650.2" cy="26.8" r="1.3" fill="url(#gBlue)"/>
</g>
<!-- grey doc -->
<path d="M656.4 19.4 L662.2 20.2 L663.7 21.2 L663.7 27.8 L657.6 27.2 L656.4 26.2 Z" fill="#a9a9a9" stroke="#8e8e8e" stroke-width="0.5"/>
<path d="M657.6 20.6 L657.6 27.2" stroke="#cfcfcf" stroke-width="0.6"/>
<!-- orange/blue upload -->
<g>
 <circle cx="673.9" cy="23.2" r="4.7" fill="#1d3d8d"/>
 <path d="M669.2 23.5 A4.7 4.7 0 0 1 678.6 23.5 Z" fill="#dc6a1e"/>
 <path d="M669.4 23.9 Q673.9 25.3 678.4 23.9" stroke="#e9eef5" stroke-width="0.6" fill="none" opacity="0.8"/>
 <path d="M673.9 19.9 L676 22.1 L674.7 22.1 L674.7 24.6 L673.1 24.6 L673.1 22.1 L671.8 22.1 Z" fill="#fff"/>
 <path d="M672.2 24.9 L673.9 27.4 L675.6 24.9 Z" fill="#5aa0ea"/>
</g>
<!-- lock -->
<g>
 <path d="M685.6 23 V21.6 A2.1 2.4 0 0 1 689.8 21.6 V23" fill="none" stroke="#9c9c9c" stroke-width="1.1"/>
 <rect x="683.8" y="22.6" width="7.8" height="5.4" rx="0.6" fill="#b88f26" stroke="#6b5312" stroke-width="0.6"/>
 <path d="M684.3 24.3 H691.1" stroke="#edc84a" stroke-width="0.9"/>
 <path d="M684.3 26.4 H691.1" stroke="#8a6c18" stroke-width="0.7"/>
 <rect x="687" y="24.6" width="1.3" height="2.2" fill="#4b390b"/>
</g>
<!-- grey circle w/ green -->
<circle cx="701" cy="23.5" r="4.5" fill="#c6c8c8" stroke="#9c9f9f" stroke-width="0.8"/>
<circle cx="701" cy="23.5" r="2.7" fill="#55c24a"/>
<path d="M699.6 23.5 L700.7 24.6 L702.5 22.4" stroke="#e9ffe4" stroke-width="0.8" fill="none"/>
<!-- pencil -->
<g>
 <path d="M711.4 27 L717.4 20.6" stroke="#a8a8a8" stroke-width="1.6" stroke-linecap="round"/>
 <path d="M710.6 27.8 L712.6 25.7" stroke="#8a8a8a" stroke-width="1.9" stroke-linecap="round"/>
 <circle cx="718" cy="26.6" r="1.3" fill="#f2a02a"/>
</g>
<!-- magnifier/key -->
<g>
 <path d="M728.6 24.6 L731.8 27.6" stroke="#d9a93a" stroke-width="2" stroke-linecap="round"/>
 <circle cx="726.8" cy="22.4" r="2.4" fill="#d2d2d2" stroke="#9a9a9a" stroke-width="1"/>
</g>
<!-- pink circle -->
<circle cx="741.5" cy="23.5" r="4.5" fill="#c9c4c6" stroke="#a39da0" stroke-width="0.8"/>
<circle cx="741.5" cy="23.5" r="3.2" fill="#e8466e"/>
<ellipse cx="741.5" cy="22.4" rx="1.2" ry="1.8" fill="#ffc7d5"/>
<!-- close X -->
<path d="M754.2 20.4 L761.2 27.2 M761.2 20.4 L754.2 27.2" stroke="#111" stroke-width="1.5"/>

<!-- bottom toolbar: plus boxes -->
<g stroke="#4f4f4f" stroke-width="0.9" fill="#fff">
 <rect x="12.5" y="523.4" width="8.1" height="7.9" rx="0.6"/>
 <rect x="749.2" y="523.4" width="8.1" height="7.9" rx="0.6"/>
</g>
<path d="M14.2 527.4 H18.8 M16.5 525.1 V529.7 M750.9 527.4 H755.5 M753.2 525.1 V529.7" stroke="#2a2a2a" stroke-width="0.8"/>
<!-- V glyphs on buttons -->
<g fill="none" stroke="#aab1c1" stroke-width="1.5" stroke-linejoin="round">
 <path d="M31.9 523.8 L35.3 530.2 L38.5 523.4"/>
 <path d="M731.5 523.8 L734.9 530.2 L738.1 523.4"/>
</g>
<!-- left tools -->
<g>
 <rect x="111.6" y="521.3" width="10.6" height="11.4" rx="1.2" fill="#3fae3a" stroke="#2a8a27" stroke-width="0.6"/>
 <path d="M112.4 522 H121.4 V526 Q116 524.5 112.4 527 Z" fill="#7fd673" opacity="0.8"/>
 <path d="M113.6 530.6 L118.4 525.4" stroke="#fff" stroke-width="1.8"/>
 <path d="M116 523.6 H120.2 V527.8 Z" fill="#fff"/>
 <path d="M117.8 529.6 H120.2 L120.8 530.3 H123.7 V534 H117.8 Z" fill="#f0a326" stroke="#c27d12" stroke-width="0.4"/>
</g>
<g>
 <circle cx="144.4" cy="524.6" r="3" fill="url(#gCyan)"/>
 <path d="M145.6 526 L150.4 530.4" stroke="url(#gGreen)" stroke-width="3.2" stroke-linecap="round"/>
 <circle cx="152" cy="532.1" r="3.1" fill="url(#gBlue)"/>
 <use href="#check" x="140.6" y="528.4"/>
</g>
<g>
 <circle cx="180.2" cy="527.4" r="5.6" fill="url(#gGrey)"/>
 <circle cx="180.2" cy="527.4" r="5.4" fill="none" stroke="#8a8a8a" stroke-width="1.2" stroke-dasharray="1.6 1.3"/>
 <circle cx="180.6" cy="527" r="1.9" fill="#f2f2f2" opacity="0.85"/>
 <use href="#check" x="171.2" y="528.6"/>
</g>
<!-- zoom in / out -->
<g>
 <path d="M363 528.6 L366.4 533.2" stroke="#d6472c" stroke-width="1.7" stroke-linecap="round"/>
 <circle cx="360.5" cy="525.5" r="3.4" fill="url(#gLens)" stroke="#7d93ad" stroke-width="1"/>
 <path d="M358.8 525.5 H362.2 M360.5 523.8 V527.2" stroke="#4d5f76" stroke-width="0.8"/>
 <path d="M399.4 528.6 L402.8 533.2" stroke="#d6472c" stroke-width="1.7" stroke-linecap="round"/>
 <circle cx="396.9" cy="525.5" r="3.4" fill="url(#gLens)" stroke="#7d93ad" stroke-width="1"/>
 <path d="M395.2 525.5 H398.6" stroke="#4d5f76" stroke-width="0.8"/>
</g>
<!-- right tools -->
<g>
 <path d="M578 523.6 H581.6 V528.6 M577 531.6 H581.6 V528.6" stroke="#a0a0a0" stroke-width="0.7" fill="none"/>
 <rect x="574.8" y="522" width="3.5" height="3.1" fill="#9a9a9a"/>
 <rect x="579.2" y="526.3" width="5.2" height="4.7" fill="#979797"/>
 <rect x="574.8" y="529.9" width="3.7" height="3.3" fill="#9d9d9d"/>
</g>
<g>
 <path d="M607.6 521.4 L616.3 522.6 L616.3 533.8 L607.6 532 Z" fill="#a6a6a6"/>
 <path d="M607.6 532 L605.9 530.6 L614.6 532.4 L616.3 533.8 Z" fill="#8f8f8f"/>
 <path d="M609 524.6 L615 525.4 M609 527 L615 527.8" stroke="#b9b9b9" stroke-width="0.6"/>
</g>
<g>
 <rect x="635" y="522.8" width="6.4" height="6.6" rx="0.6" fill="#4a4f4a"/>
 <rect x="642.2" y="522.8" width="6.4" height="6.6" rx="0.6" fill="#4a4f4a"/>
 <rect x="636" y="523.6" width="4.4" height="4.8" fill="#27b43a"/>
 <rect x="643.2" y="523.6" width="4.4" height="4.8" fill="#27b43a"/>
 <path d="M638.2 523.8 V528.2 M645.4 523.8 V528.2" stroke="#9af09f" stroke-width="0.8"/>
 <rect x="637.2" y="527.4" width="6.6" height="7" rx="0.6" fill="#4a4f52"/>
 <rect x="638.2" y="528.3" width="4.6" height="5" fill="#2b72d6"/>
 <path d="M640.5 528.5 V533" stroke="#a6ccff" stroke-width="0.8"/>
</g>

</svg>
</div></body></html>
